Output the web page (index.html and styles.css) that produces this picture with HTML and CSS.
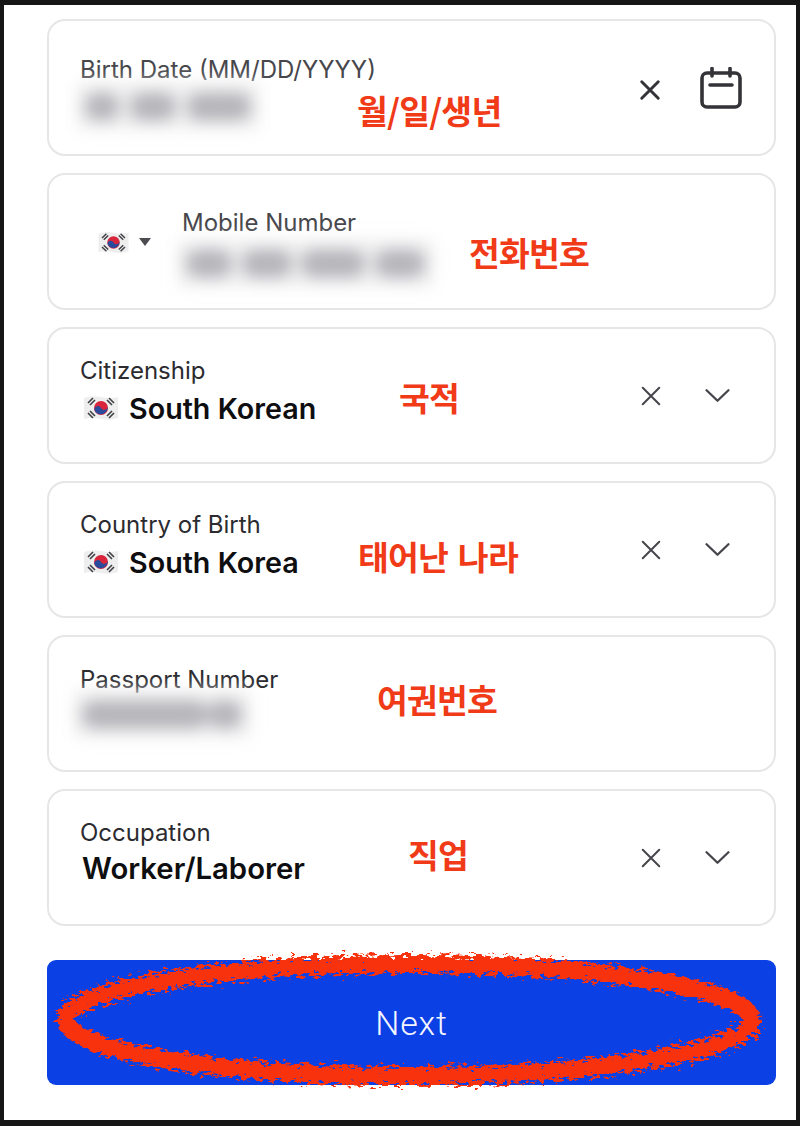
FILE: index.html
```html
<!DOCTYPE html>
<html lang="en">
<head>
<meta charset="utf-8">
<title>Traveller details</title>
<link rel="stylesheet" href="styles.css">
</head>
<body>
<svg class="defs" width="0" height="0" aria-hidden="true">
  <defs>
    <symbol id="flag" viewBox="0 0 36 26">
      <path d="M1 3 Q9 0 18 2 T35 2 V23 Q27 26 18 24 T1 24 Z" fill="#eeeeee"/>
      <g stroke="#3f3f46" stroke-width="1.6">
        <path d="M5 8 L10 3 M7 10 L12 5"/>
        <path d="M26 3 L31 8 M24 5 L29 10"/>
        <path d="M5 18 L10 23 M7 16 L12 21"/>
        <path d="M31 18 L26 23 M29 16 L24 21"/>
      </g>
      <circle cx="18" cy="13" r="7" fill="#d8253c"/>
      <path d="M11.2 14.5 A3.6 3.6 0 0 1 18 13 A3.6 3.6 0 0 0 24.8 11.5 A7 7 0 0 1 11.2 14.5 Z" fill="#2a4a9c"/>
    </symbol>
    <symbol id="x-thin" viewBox="0 0 24 24">
      <path d="M3 3 L21 21 M21 3 L3 21" fill="none" stroke="#45454b" stroke-width="2.2" stroke-linecap="round"/>
    </symbol>
    <symbol id="chev" viewBox="0 0 24 14">
      <path d="M1.5 2 L12 12 L22.5 2" fill="none" stroke="#45454b" stroke-width="2.2" stroke-linecap="round" stroke-linejoin="round"/>
    </symbol>
    <filter id="rough" x="-5%" y="-25%" width="110%" height="150%">
      <feTurbulence type="fractalNoise" baseFrequency="0.14 0.34" numOctaves="4" seed="7"/>
      <feDisplacementMap in="SourceGraphic" scale="18"/>
    </filter>
  </defs>
</svg>

<main class="frame">
  <section class="card">
    <div class="field field-date">
      <span class="label label-muted">Birth Date (MM/DD/YYYY)</span>
      <div class="blur blur-date"><i class="seg s26"></i><i class="seg s30"></i><i class="seg s44"></i></div>
    </div>
    <div class="actions actions-date">
      <svg class="icon-x-bold" viewBox="0 0 24 24"><path d="M3 3 L21 21 M21 3 L3 21" fill="none" stroke="#333338" stroke-width="3.2" stroke-linecap="round"/></svg>
      <svg class="icon-cal" viewBox="0 0 44 44"><rect x="3" y="6" width="38" height="34" rx="5" fill="none" stroke="#333338" stroke-width="3.6"/><path d="M13 1.5 V9 M31 1.5 V9 M11 18 H33" fill="none" stroke="#333338" stroke-width="3.6" stroke-linecap="round"/></svg>
    </div>
    <span class="note note-date">월/일/생년</span>
  </section>

  <section class="card card-phone">
    <div class="dial">
      <svg class="flag-dial"><use href="#flag"/></svg>
      <span class="caret"></span>
    </div>
    <div class="field field-phone">
      <span class="label label-muted">Mobile Number</span>
      <div class="blur blur-phone"><i class="seg s30"></i><i class="seg s36"></i><i class="seg s44"></i><i class="seg s36"></i></div>
    </div>
    <span class="note note-phone">전화번호</span>
  </section>

  <section class="card">
    <div class="field">
      <span class="label">Citizenship</span>
      <div class="value value-flag"><svg class="flag"><use href="#flag"/></svg>South Korean</div>
    </div>
    <div class="actions">
      <svg class="icon-x"><use href="#x-thin"/></svg>
      <svg class="icon-chev"><use href="#chev"/></svg>
    </div>
    <span class="note note-citizen">국적</span>
  </section>

  <section class="card">
    <div class="field">
      <span class="label">Country of Birth</span>
      <div class="value value-flag"><svg class="flag"><use href="#flag"/></svg>South Korea</div>
    </div>
    <div class="actions">
      <svg class="icon-x"><use href="#x-thin"/></svg>
      <svg class="icon-chev"><use href="#chev"/></svg>
    </div>
    <span class="note note-birth">태어난 나라</span>
  </section>

  <section class="card">
    <div class="field field-passport">
      <span class="label">Passport Number</span>
      <div class="blur blur-passport"><i class="seg s130"></i><i class="seg s26"></i></div>
    </div>
    <span class="note note-passport">여권번호</span>
  </section>

  <section class="card">
    <div class="field">
      <span class="label">Occupation</span>
      <div class="value value-plain">Worker/Laborer</div>
    </div>
    <div class="actions">
      <svg class="icon-x"><use href="#x-thin"/></svg>
      <svg class="icon-chev"><use href="#chev"/></svg>
    </div>
    <span class="note note-job">직업</span>
  </section>

  <div class="next-wrap">
    <button class="next" type="button">Next</button>
    <svg class="scribble" viewBox="0 0 730 140" aria-hidden="true">
      <ellipse cx="362" cy="70" rx="343" ry="56" fill="none" stroke="#f8300c" stroke-width="18" filter="url(#rough)"/>
    </svg>
  </div>
</main>
</body>
</html>
```

FILE: styles.css
```css
* { box-sizing: border-box; }

html, body {
  margin: 0;
  padding: 0;
  background: #161616;
}

.defs { position: absolute; }

.frame {
  width: 792px;
  height: 1115px;
  margin: 5px 0 0 4px;
  padding: 14px 20px 0 43px;
  background: #ffffff;
  display: flex;
  flex-direction: column;
  gap: 17px;
  font-family: "Inter", "Liberation Sans", sans-serif;
}

.card {
  position: relative;
  height: 137px;
  border: 2px solid #e6e6e8;
  border-radius: 18px;
  background: #ffffff;
  display: flex;
  align-items: center;
  justify-content: space-between;
  padding: 0 31px;
}

.card-phone {
  justify-content: flex-start;
  gap: 31px;
  padding-left: 48px;
}

.field {
  display: flex;
  flex-direction: column;
  margin-top: -9px;
}

.field-date { margin-top: 9px; }
.field-phone { margin-top: 11px; }
.field-passport { margin-top: -5px; }

.label {
  font-size: 24px;
  line-height: 30px;
  color: #2b2b30;
}

.label-muted { color: #46464b; }

.value {
  display: flex;
  align-items: center;
  gap: 10px;
  height: 40px;
  font-size: 28.7px;
  font-weight: 600;
  color: #0e0e10;
}

.value-flag { padding-top: 4px; }
.value-plain { padding-left: 2px; font-size: 29.3px; }

.flag { width: 36px; height: 26px; margin-left: 3px; }

.blur {
  display: flex;
  align-items: center;
  justify-content: space-between;
  height: 46px;
  padding: 0 8px;
  background: #efeff0;
  filter: blur(8px);
}

.seg {
  display: block;
  height: 27px;
  background: #b4b4b9;
  border-radius: 13px;
}

.s26 { width: 34px; }
.s30 { width: 46px; }
.s36 { width: 50px; }
.s44 { width: 64px; }
.s130 { width: 126px; }

.blur-date { width: 182px; margin-left: -3px; margin-top: -2px; }
.blur-phone { width: 255px; margin-left: -4px; margin-top: 2px; }
.blur-passport { width: 176px; margin-left: -6px; margin-top: -4px; }

.dial { display: flex; align-items: center; gap: 9px; margin-top: 1px; }
.flag-dial { width: 33px; height: 23px; }
.caret {
  width: 0;
  height: 0;
  border-left: 6px solid transparent;
  border-right: 6px solid transparent;
  border-top: 8px solid #4b4b50;
}

.actions {
  display: flex;
  align-items: center;
  gap: 43px;
  margin-top: 0;
  padding-right: 13px;
}

.actions-date { gap: 38px; padding-right: 0; }

.icon-x { width: 22px; height: 22px; }
.icon-chev { width: 25px; height: 15px; }
.icon-x-bold { width: 22px; height: 22px; margin-top: 4px; }
.icon-cal { width: 44px; height: 44px; margin-top: 2px; }

.note {
  position: absolute;
  font-family: "Noto Sans CJK KR", sans-serif;
  font-weight: 700;
  font-size: 33.5px;
  line-height: 40px;
  letter-spacing: -0.8px;
  word-spacing: 3px;
  color: #f03a18;
  white-space: nowrap;
}

.note-date { left: 308px; top: 69px; }
.note-phone { left: 420px; top: 57px; }
.note-citizen { left: 350px; top: 48px; }
.note-birth { left: 309px; top: 53px; }
.note-passport { left: 328px; top: 42px; }
.note-job { left: 359px; top: 43px; }

.next-wrap {
  position: relative;
  margin-top: 17px;
  height: 125px;
}

.next {
  display: block;
  width: 100%;
  height: 100%;
  border: 0;
  border-radius: 9px;
  background: #0a40e4;
  color: #f4f6ff;
  font-family: "Roboto", "Liberation Sans", sans-serif;
  font-weight: 300;
  font-size: 34px;
  letter-spacing: 0.8px;
  padding: 0;
  cursor: pointer;
}

.scribble {
  position: absolute;
  left: 0;
  top: -10px;
  width: 730px;
  height: 140px;
  pointer-events: none;
}
```
